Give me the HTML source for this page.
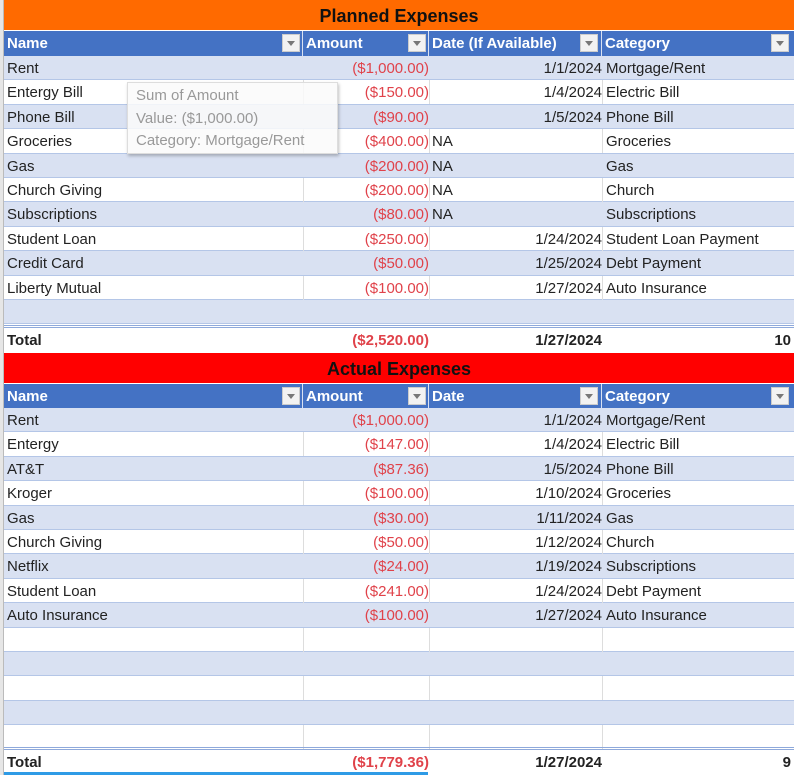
<!DOCTYPE html>
<html><head><meta charset="utf-8"><style>
*{margin:0;padding:0;box-sizing:border-box}
body{width:794px;height:775px;overflow:hidden;background:#fff;font-family:"Liberation Sans",sans-serif;position:relative;color:#222}
.strip{position:absolute;left:0;top:0;width:4px;height:775px;background:#e6e6e6;border-right:1px solid #bbb}
.title{position:absolute;left:4px;width:790px;height:30px;text-align:center;font-weight:bold;font-size:18px;line-height:32px;color:#111}
.hdr{position:absolute;left:4px;width:790px;height:25px;background:#4472c4;color:#fff;font-weight:bold;font-size:15px}
.hdr div{position:absolute;top:0;height:25px;line-height:26px;padding-left:3px;border-right:1px solid #d9e1f2}
.dd{position:absolute;top:3px;width:18px;height:18px;background:#f2f2f2;border:1px solid #ccc}
.dd:after{content:"";position:absolute;left:4px;top:6px;border-left:4px solid transparent;border-right:4px solid transparent;border-top:5px solid #777}
.r{position:absolute;left:4px;width:790px;height:24.4px;font-size:15px;border-bottom:1px solid #b4c6e7}
.b{background:#d9e1f2}
.r span{position:absolute;top:0;line-height:25px;white-space:nowrap}
.n{left:3px}
.a{right:365px;color:#e0424a}
.d{right:192px}
.c{left:602px}
.dl{left:428px}
.r.w i{position:absolute;top:0;height:24px;border-left:1px solid #ddd}
.tot{position:absolute;left:4px;width:790px;height:25px;font-size:15px;font-weight:bold;border-top:3px double #8ea9db}
.tot span{position:absolute;top:0;line-height:25px}
.tip{position:absolute;left:127px;top:82px;width:211px;height:72px;background:rgba(250,250,250,.85);border:1px solid #ddd;box-shadow:1px 2px 3px rgba(0,0,0,.25);color:#999;font-size:15px;line-height:22.5px;padding:2px 8px}
</style></head><body>
<div class="strip"></div>

<div class="title" style="top:0;background:#ff6a00">Planned Expenses</div>
<div class="hdr" style="top:31px">
<div style="left:0;width:299px">Name</div><span class="dd" style="left:278px"></span>
<div style="left:299px;width:126px">Amount</div><span class="dd" style="left:404px"></span>
<div style="left:425px;width:173px">Date (If Available)</div><span class="dd" style="left:576px"></span>
<div style="left:598px;width:192px;border:0">Category</div><span class="dd" style="left:767px"></span>
</div>

<div class="r b" style="top:56px"><span class="n">Rent</span><span class="a">($1,000.00)</span><span class="d">1/1/2024</span><span class="c">Mortgage/Rent</span></div>
<div class="r w" style="top:80.4px"><i style="left:299px"></i><i style="left:425px"></i><i style="left:598px"></i><span class="n">Entergy Bill</span><span class="a">($150.00)</span><span class="d">1/4/2024</span><span class="c">Electric Bill</span></div>
<div class="r b" style="top:104.8px"><span class="n">Phone Bill</span><span class="a">($90.00)</span><span class="d">1/5/2024</span><span class="c">Phone Bill</span></div>
<div class="r w" style="top:129.2px"><i style="left:299px"></i><i style="left:425px"></i><i style="left:598px"></i><span class="n">Groceries</span><span class="a">($400.00)</span><span class="dl">NA</span><span class="c">Groceries</span></div>
<div class="r b" style="top:153.6px"><span class="n">Gas</span><span class="a">($200.00)</span><span class="dl">NA</span><span class="c">Gas</span></div>
<div class="r w" style="top:178px"><i style="left:299px"></i><i style="left:425px"></i><i style="left:598px"></i><span class="n">Church Giving</span><span class="a">($200.00)</span><span class="dl">NA</span><span class="c">Church</span></div>
<div class="r b" style="top:202.4px"><span class="n">Subscriptions</span><span class="a">($80.00)</span><span class="dl">NA</span><span class="c">Subscriptions</span></div>
<div class="r w" style="top:226.8px"><i style="left:299px"></i><i style="left:425px"></i><i style="left:598px"></i><span class="n">Student Loan</span><span class="a">($250.00)</span><span class="d">1/24/2024</span><span class="c">Student Loan Payment</span></div>
<div class="r b" style="top:251.2px"><span class="n">Credit Card</span><span class="a">($50.00)</span><span class="d">1/25/2024</span><span class="c">Debt Payment</span></div>
<div class="r w" style="top:275.6px"><i style="left:299px"></i><i style="left:425px"></i><i style="left:598px"></i><span class="n">Liberty Mutual</span><span class="a">($100.00)</span><span class="d">1/27/2024</span><span class="c">Auto Insurance</span></div>
<div class="r b" style="top:300px"></div>
<div class="tot" style="top:325px"><span style="left:3px">Total</span><span style="right:365px;color:#e0424a">($2,520.00)</span><span style="right:192px">1/27/2024</span><span style="right:3px">10</span></div>

<div class="tip">Sum of Amount<br>Value: ($1,000.00)<br>Category: Mortgage/Rent</div>

<div class="title" style="top:353px;background:#ff0000">Actual Expenses</div>
<div class="hdr" style="top:384px">
<div style="left:0;width:299px">Name</div><span class="dd" style="left:278px"></span>
<div style="left:299px;width:126px">Amount</div><span class="dd" style="left:404px"></span>
<div style="left:425px;width:173px">Date</div><span class="dd" style="left:576px"></span>
<div style="left:598px;width:192px;border:0">Category</div><span class="dd" style="left:767px"></span>
</div>

<div class="r b" style="top:408px"><span class="n">Rent</span><span class="a">($1,000.00)</span><span class="d">1/1/2024</span><span class="c">Mortgage/Rent</span></div>
<div class="r w" style="top:432.4px"><i style="left:299px"></i><i style="left:425px"></i><i style="left:598px"></i><span class="n">Entergy</span><span class="a">($147.00)</span><span class="d">1/4/2024</span><span class="c">Electric Bill</span></div>
<div class="r b" style="top:456.8px"><span class="n">AT&amp;T</span><span class="a">($87.36)</span><span class="d">1/5/2024</span><span class="c">Phone Bill</span></div>
<div class="r w" style="top:481.2px"><i style="left:299px"></i><i style="left:425px"></i><i style="left:598px"></i><span class="n">Kroger</span><span class="a">($100.00)</span><span class="d">1/10/2024</span><span class="c">Groceries</span></div>
<div class="r b" style="top:505.6px"><span class="n">Gas</span><span class="a">($30.00)</span><span class="d">1/11/2024</span><span class="c">Gas</span></div>
<div class="r w" style="top:530px"><i style="left:299px"></i><i style="left:425px"></i><i style="left:598px"></i><span class="n">Church Giving</span><span class="a">($50.00)</span><span class="d">1/12/2024</span><span class="c">Church</span></div>
<div class="r b" style="top:554.4px"><span class="n">Netflix</span><span class="a">($24.00)</span><span class="d">1/19/2024</span><span class="c">Subscriptions</span></div>
<div class="r w" style="top:578.8px"><i style="left:299px"></i><i style="left:425px"></i><i style="left:598px"></i><span class="n">Student Loan</span><span class="a">($241.00)</span><span class="d">1/24/2024</span><span class="c">Debt Payment</span></div>
<div class="r b" style="top:603.2px"><span class="n">Auto Insurance</span><span class="a">($100.00)</span><span class="d">1/27/2024</span><span class="c">Auto Insurance</span></div>
<div class="r w" style="top:627.6px"><i style="left:299px"></i><i style="left:425px"></i><i style="left:598px"></i></div>
<div class="r b" style="top:652px"></div>
<div class="r w" style="top:676.4px"><i style="left:299px"></i><i style="left:425px"></i><i style="left:598px"></i></div>
<div class="r b" style="top:700.8px"></div>
<div class="r w" style="top:725.2px"><i style="left:299px"></i><i style="left:425px"></i><i style="left:598px"></i></div>
<div class="tot" style="top:747px"><span style="left:3px">Total</span><span style="right:365px;color:#e0424a">($1,779.36)</span><span style="right:192px">1/27/2024</span><span style="right:3px">9</span></div>
<div style="position:absolute;left:4px;top:772px;width:424px;height:3px;background:#2e9be6"></div>
</body></html>
